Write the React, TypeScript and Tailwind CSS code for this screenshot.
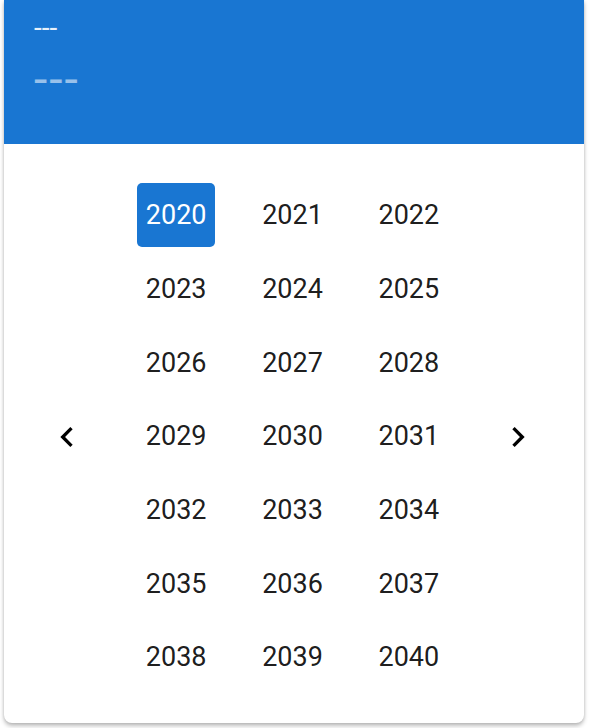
const YEARS = Array.from({ length: 21 }, (_, i) => 2020 + i);

function Chevron({ dir }: { dir: 'left' | 'right' }) {
    const d =
        dir === 'left'
            ? 'M15.41 7.41L14 6l-6 6 6 6 1.41-1.41L10.83 12z'
            : 'M10 6L8.59 7.41 13.17 12l-4.58 4.59L10 18l6-6z';
    return (
        <svg viewBox="0 0 24 24" className="w-[44px] h-[44px]" fill="currentColor">
            <path d={d} />
        </svg>
    );
}

export default function App() {
    const selected = 2020;
    return (
        <div className="min-h-screen w-full bg-white" style={{ fontFamily: 'Roboto, "Liberation Sans", sans-serif' }}>
            <div className="ml-[4px] w-[580px] h-[723px] bg-white rounded-b-[8px] shadow-[0_3px_4px_rgba(0,0,0,0.25),0_0_3px_rgba(0,0,0,0.12)] overflow-hidden flex flex-col">
                {/* Toolbar */}
                <div className="h-[144px] bg-[#1976d2] pl-[30px] flex flex-col">
                    <span className="text-[28px] leading-none text-white/90 mt-[14px]">---</span>
                    <span className="text-[48px] leading-none text-white/55 mt-[14px] tracking-[2px]">---</span>
                </div>

                {/* Year grid */}
                <div className="flex-1 flex items-center justify-center gap-[31px] pt-[6px] pr-[3px]">
                    <button className="w-[40px] h-[44px] flex items-center justify-center text-black">
                        <Chevron dir="left" />
                    </button>
                    <div className="w-[349px] grid grid-cols-3 gap-y-[9.7px]">
                        {YEARS.map((y) => (
                            <div key={y} className="flex justify-center">
                                <button
                                    className={
                                        y === selected
                                            ? 'w-[78px] h-[64px] rounded-[5px] bg-[#1976d2] text-white text-[27px]'
                                            : 'w-[78px] h-[64px] rounded-[5px] text-black/[0.9] text-[27px]'
                                    }
                                >
                                    {y}
                                </button>
                            </div>
                        ))}
                    </div>
                    <button className="w-[40px] h-[44px] flex items-center justify-center text-black">
                        <Chevron dir="right" />
                    </button>
                </div>
            </div>
        </div>
    );
}
